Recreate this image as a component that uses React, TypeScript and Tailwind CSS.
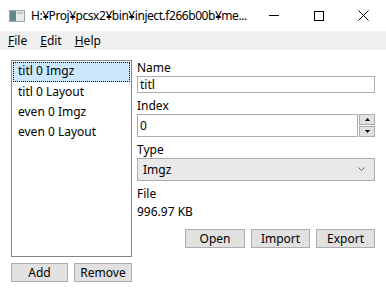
import React from 'react'

const font = { fontFamily: '"Noto Sans", "Segoe UI", sans-serif' }

function Btn({ label, w }: { label: string; w: string }) {
  return (
    <button
      className={`${w} h-[19px] bg-[#e1e1e1] border border-[#adadad] text-[12px] leading-[17px] text-black flex items-center justify-center`}
    >
      {label}
    </button>
  )
}

export default function App() {
  const items = ['titl 0 Imgz', 'titl 0 Layout', 'even 0 Imgz', 'even 0 Layout']

  return (
    <div className="w-[386px] h-[293px] bg-white overflow-hidden text-black" style={font}>
      {/* Title bar */}
      <div className="h-[31px] flex items-center">
        <svg width="16" height="12" viewBox="0 0 16 12" className="ml-[9px] shrink-0 block">
          <rect x="0.5" y="0.5" width="15" height="11" fill="#e8ecec" stroke="#9aa6a6" />
          <rect x="1" y="1" width="6" height="10" fill="#5f8a8a" />
          <rect x="8" y="2" width="6" height="2" fill="#b9c6c6" />
        </svg>
        <span className="ml-[6px] text-[12px] leading-[16px] tracking-[-0.45px] whitespace-nowrap">
          H:¥Proj¥pcsx2¥bin¥inject.f266b00b¥me...
        </span>
        <div className="ml-auto flex h-full shrink-0">
          <div className="w-[45px] flex items-center justify-center">
            <div className="w-[10px] h-px bg-black" />
          </div>
          <div className="w-[45px] flex items-center justify-center">
            <div className="w-[10px] h-[10px] border border-black" />
          </div>
          <div className="w-[45px] flex items-center justify-center">
            <svg width="11" height="11" viewBox="0 0 11 11" className="block">
              <path d="M0.5 0.5L10.5 10.5M10.5 0.5L0.5 10.5" stroke="#000" strokeWidth="1" />
            </svg>
          </div>
        </div>
      </div>

      {/* Menu bar */}
      <div className="h-[19px] bg-[#f0f0f0] flex items-center text-[12px] leading-[16px]">
        <span className="ml-[8px]"><u>F</u>ile</span>
        <span className="ml-[13px]"><u>E</u>dit</span>
        <span className="ml-[13px]"><u>H</u>elp</span>
      </div>

      {/* Body */}
      <div className="flex pt-[10px] pl-[11px]">
        {/* Left column */}
        <div className="w-[121px] flex flex-col">
          <div className="h-[197px] border border-[#828790] p-px flex flex-col">
            {items.map((t, i) => (
              <div
                key={t}
                className={`h-[20px] text-[12px] leading-[18px] pl-[5px] ${
                  i === 0
                    ? 'bg-[#cce8ff] outline outline-1 outline-dotted outline-black -outline-offset-1 h-[19px] mb-px'
                    : ''
                }`}
              >
                {t}
              </div>
            ))}
          </div>
          <div className="flex gap-[6px] mt-[6px]">
            <Btn label="Add" w="w-[57px]" />
            <Btn label="Remove" w="w-[58px]" />
          </div>
        </div>

        {/* Right column */}
        <div className="w-[238px] ml-[5px] flex flex-col text-[12px]">
          <div className="h-[16px] leading-[16px]">Name</div>
          <div className="h-[17px] border border-[#abadb3] leading-[15px] px-[2px]">titl</div>

          <div className="h-[16px] leading-[16px] mt-[5px]">Index</div>
          <div className="h-[23px] flex">
            <div className="flex-1 border border-[#abadb3] leading-[21px] px-[2px]">0</div>
            <div className="w-[16px] flex flex-col ml-px">
              <div className="h-[11px] bg-[#e1e1e1] border border-[#adadad] flex items-center justify-center">
                <svg width="5" height="3" viewBox="0 0 5 3" className="block"><path d="M2.5 0L5 3H0z" fill="#000" /></svg>
              </div>
              <div className="h-[11px] mt-px bg-[#e1e1e1] border border-[#adadad] flex items-center justify-center">
                <svg width="5" height="3" viewBox="0 0 5 3" className="block"><path d="M0 0H5L2.5 3z" fill="#000" /></svg>
              </div>
            </div>
          </div>

          <div className="h-[16px] leading-[16px] mt-[5px]">Type</div>
          <div className="h-[23px] border border-[#acacac] bg-[#e9e9e9] flex items-center px-[5px]">
            <span className="leading-[16px]">Imgz</span>
            <svg width="7" height="5" viewBox="0 0 7 5" className="ml-auto mr-[4px] block">
              <path d="M0.5 0.5L3.5 3.5L6.5 0.5" stroke="#606060" fill="none" />
            </svg>
          </div>

          <div className="h-[16px] leading-[16px] mt-[5px]">File</div>
          <div className="h-[16px] leading-[16px] mt-[2px]">996.97 KB</div>

          <div className="flex justify-end gap-[6px] mt-[9px]">
            <Btn label="Open" w="w-[60px]" />
            <Btn label="Import" w="w-[59px]" />
            <Btn label="Export" w="w-[59px]" />
          </div>
        </div>
      </div>
    </div>
  )
}
